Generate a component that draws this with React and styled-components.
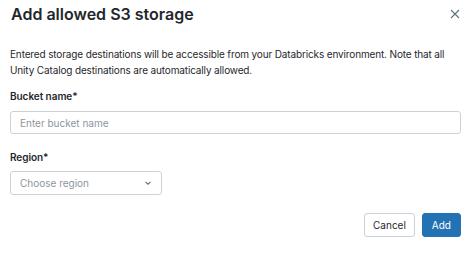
import styled, { createGlobalStyle } from "styled-components";

const GlobalStyle = createGlobalStyle`
  body {
    margin: 0;
    background: #fff;
    font-family: Inter, "Noto Sans", sans-serif;
    color: #1f272d;
  }
`;

const Dialog = styled.div`
  width: 474px;
  height: 258px;
  box-sizing: border-box;
  padding: 3px 13px 0 10px;
  display: flex;
  flex-direction: column;
`;

const Header = styled.div`
  display: flex;
  align-items: center;
  justify-content: space-between;
`;

const Title = styled.h2`
  margin: 0 0 0 1px;
  font-size: 16px;
  line-height: 22px;
  font-weight: 600;
  color: #1f272d;
`;

const CloseButton = styled.button`
  border: 0;
  background: none;
  padding: 0;
  width: 14px;
  height: 14px;
  display: flex;
  align-items: center;
  justify-content: center;
  margin-right: -1px;
  cursor: pointer;
`;

const Description = styled.p`
  margin: 21px 0 0;
  font-size: 10px;
  line-height: 16px;
  letter-spacing: -0.14px;
  color: #1f272d;
`;

const Label = styled.label`
  display: block;
  margin-top: ${(p) => p.$top}px;
  font-size: 10px;
  line-height: 16px;
  font-weight: 600;
  letter-spacing: -0.05px;
  color: #1f272d;
`;

const TextInput = styled.input`
  display: block;
  box-sizing: border-box;
  width: 100%;
  height: 23px;
  margin-top: ${(p) => p.$top}px;
  padding: 0 9px;
  border: 1px solid #cbd2d8;
  border-radius: 3px;
  font-family: inherit;
  font-size: 10px;
  color: #1f272d;
  outline: none;
  &::placeholder {
    color: #8c969e;
  }
`;

const Select = styled.div`
  box-sizing: border-box;
  width: 152px;
  height: 24px;
  margin-top: ${(p) => p.$top}px;
  padding: 0 9px 0 9px;
  border: 1px solid #cbd2d8;
  border-radius: 3px;
  display: flex;
  align-items: center;
  justify-content: space-between;
  font-size: 10px;
  color: #8c969e;
`;

const Footer = styled.div`
  display: flex;
  justify-content: flex-end;
  gap: 7px;
  margin-top: 18px;
`;

const Button = styled.button`
  box-sizing: border-box;
  height: 24px;
  padding: 0 ${(p) => (p.$primary ? 9 : 8)}px;
  border-radius: 3px;
  border: 1px solid ${(p) => (p.$primary ? "#2272b4" : "#cbd2d8")};
  background: ${(p) => (p.$primary ? "#2272b4" : "#fff")};
  color: ${(p) => (p.$primary ? "#fff" : "#1f272d")};
  font-family: inherit;
  font-size: 10px;
  cursor: pointer;
`;

const App = () => (
  <>
    <GlobalStyle />
    <Dialog>
      <Header>
        <Title>Add allowed S3 storage</Title>
        <CloseButton aria-label="Close">
          <svg width="10" height="10" viewBox="0 0 10 10">
            <path d="M1 1L9 9M9 1L1 9" stroke="#5f7281" strokeWidth="1.1" fill="none" />
          </svg>
        </CloseButton>
      </Header>
      <Description>
        Entered storage destinations will be accessible from your Databricks environment. Note that all
        Unity Catalog destinations are automatically allowed.
      </Description>
      <Label $top={10}>Bucket name*</Label>
      <TextInput $top={7} placeholder="Enter bucket name" />
      <Label $top={15}>Region*</Label>
      <Select $top={6}>
        <span>Choose region</span>
        <svg width="8" height="6" viewBox="0 0 8 6">
          <path d="M1.5 1.8L4 4.2L6.5 1.8" stroke="#5f7281" strokeWidth="1.1" fill="none" />
        </svg>
      </Select>
      <Footer>
        <Button>Cancel</Button>
        <Button $primary>Add</Button>
      </Footer>
    </Dialog>
  </>
);

export default App;
